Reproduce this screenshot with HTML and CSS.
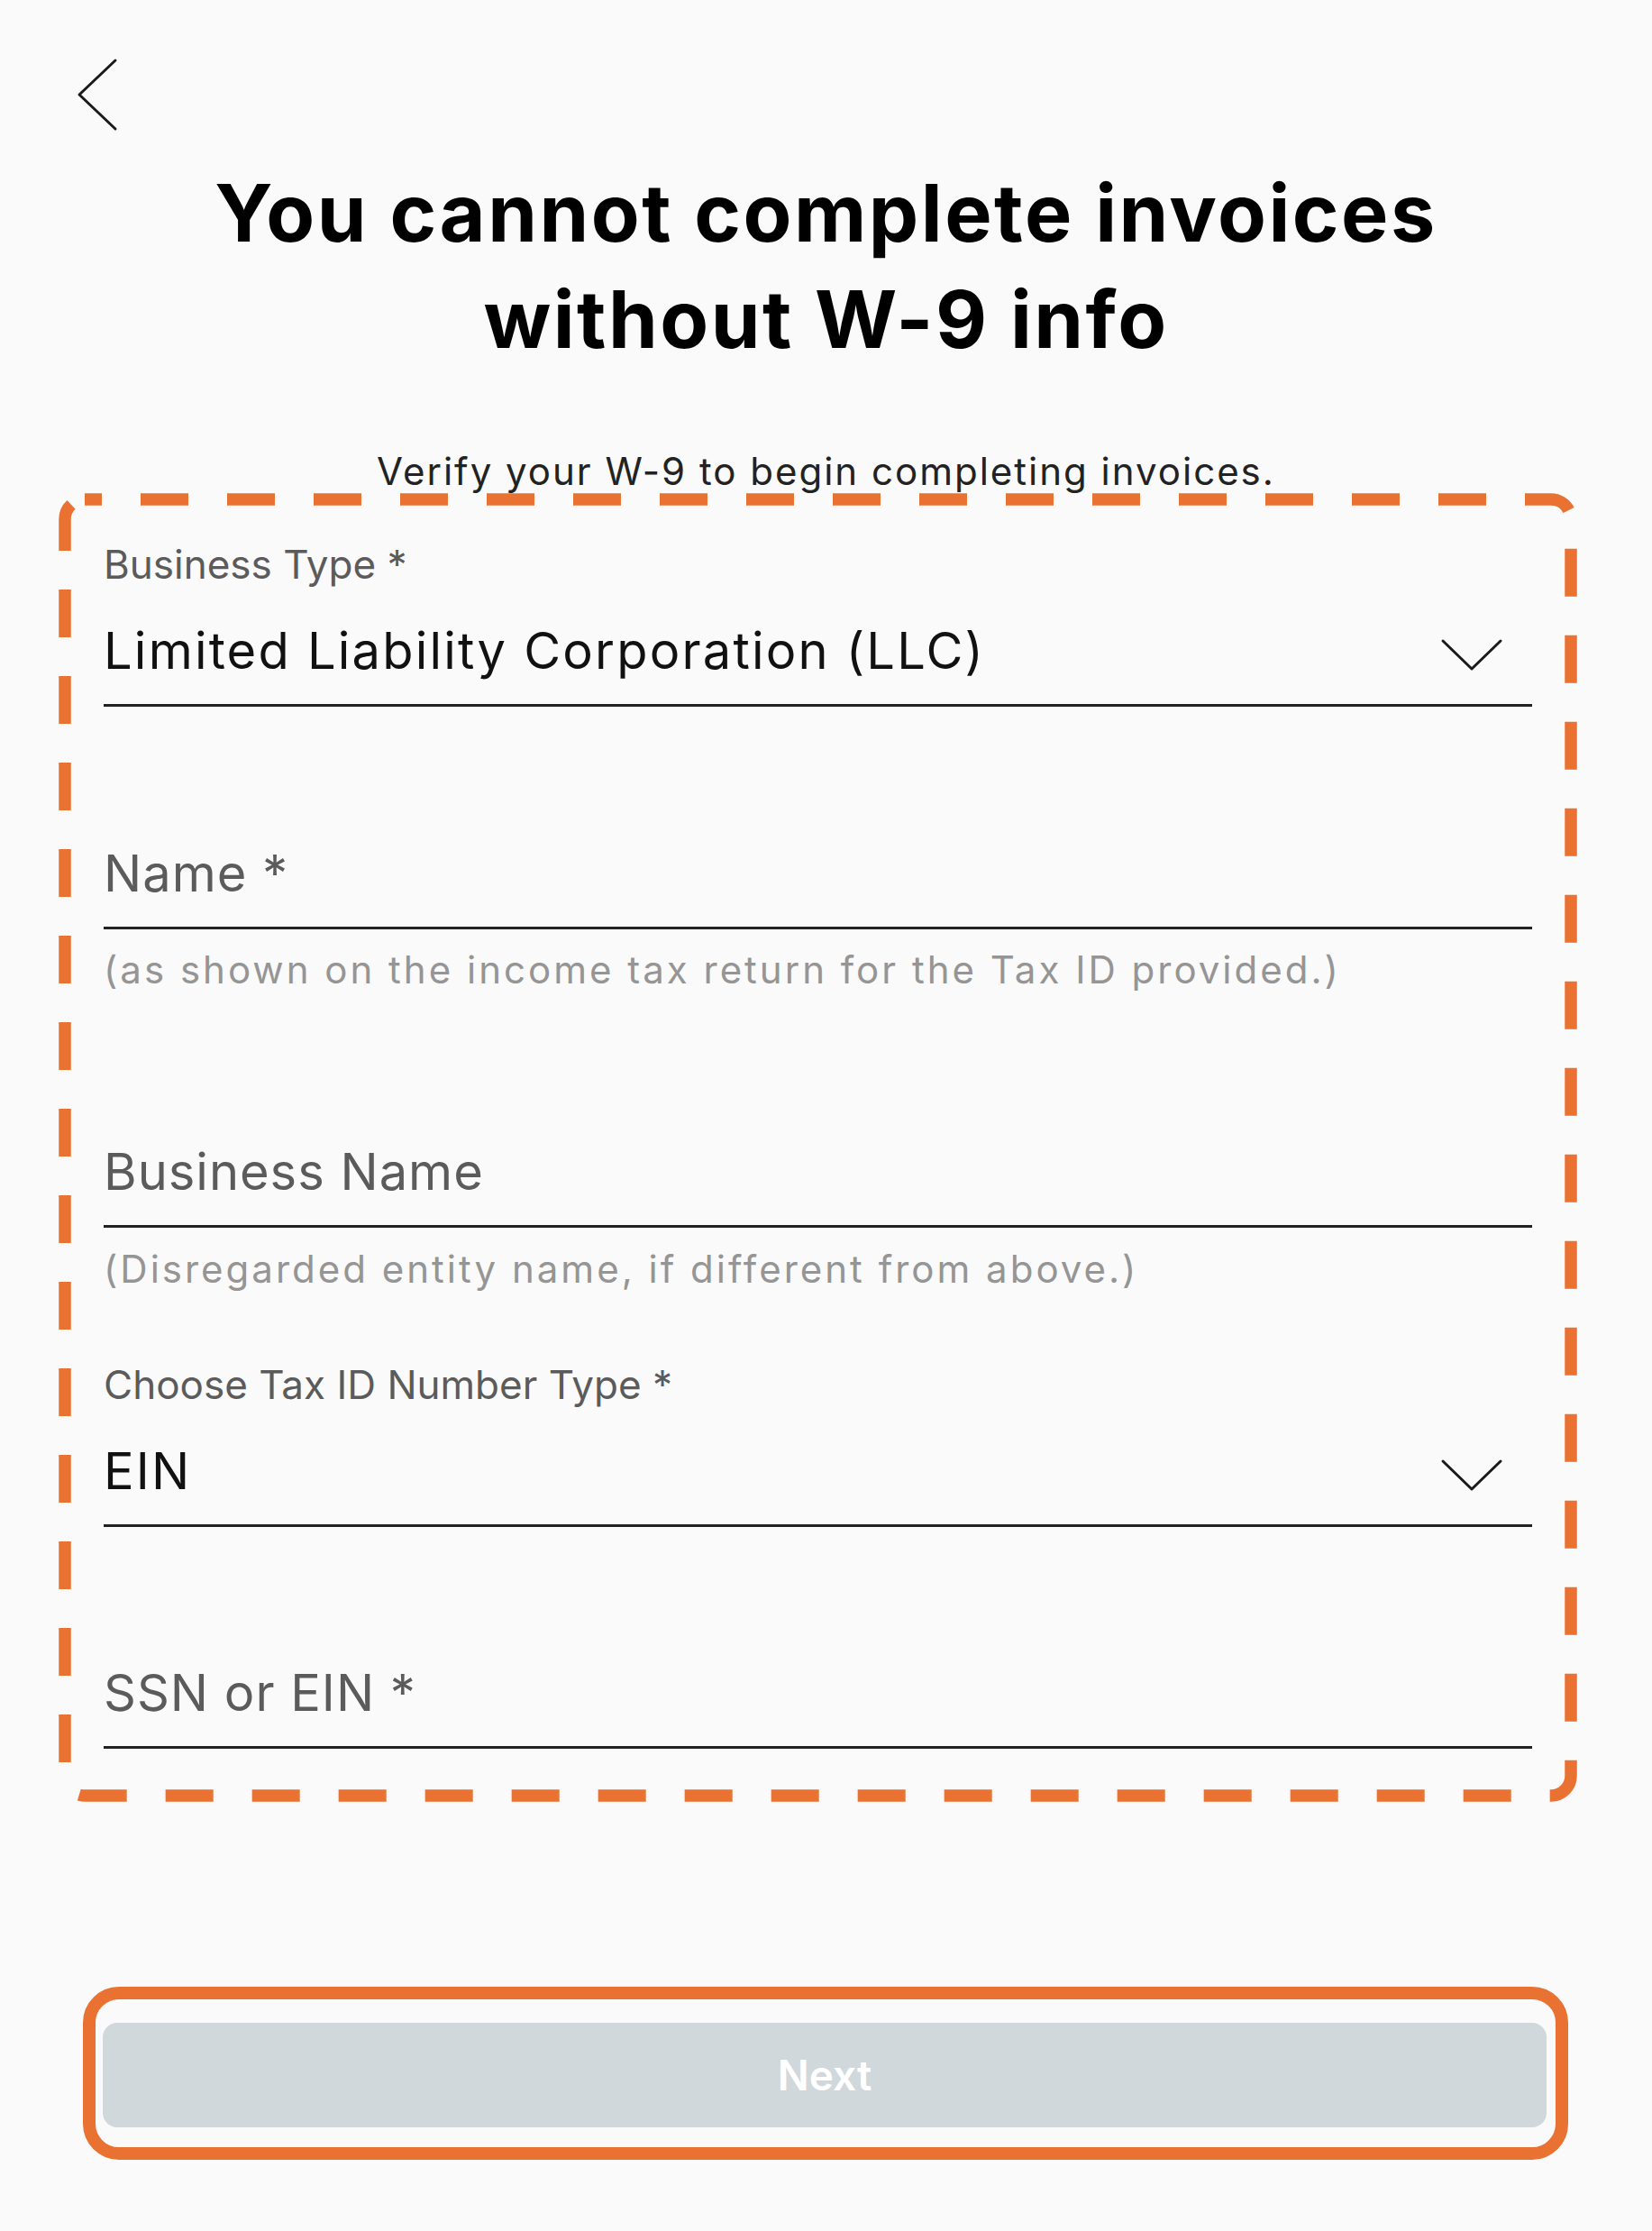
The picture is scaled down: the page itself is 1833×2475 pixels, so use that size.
FILE: index.html
```html
<!DOCTYPE html>
<html lang="en">
  <head>
    <meta charset="UTF-8" />
    <meta name="viewport" content="width=device-width, initial-scale=1.0" />
    <title>W-9 Info</title>
    <link rel="stylesheet" href="styles.css">
  </head>
  <body>
    <div class="screen">
      <div class="top-bar">
        <button class="back-btn" type="button" aria-label="Back">
          <svg width="60" height="90" viewBox="0 0 60 90">
            <path d="M50 7 L10 45 L50 83" fill="none" stroke="#1a1a1a" stroke-width="3" stroke-linecap="round" stroke-linejoin="round" />
          </svg>
        </button>
      </div>

      <h1 class="title">You cannot complete invoices<br>without W-9 info</h1>
      <p class="subtitle">Verify your W-9 to begin completing invoices.</p>

      <div class="w9-form">
        <svg class="highlight" width="1685" height="1452">
          <rect x="7" y="7" width="1671" height="1438" rx="22" ry="22" />
        </svg>

        <div class="field field-select">
          <label class="field-label">Business Type *</label>
          <div class="field-control">
            <span class="field-value">Limited Liability Corporation (LLC)</span>
            <svg class="caret" width="70" height="40" viewBox="0 0 70 40">
              <path d="M3 5 L35 36 L67 5" fill="none" stroke="#1a1a1a" stroke-width="3" stroke-linecap="round" stroke-linejoin="round" />
            </svg>
          </div>
        </div>

        <div class="field field-text field-name">
          <div class="field-control">
            <span class="field-placeholder">Name *</span>
          </div>
          <p class="field-help">(as shown on the income tax return for the Tax ID provided.)</p>
        </div>

        <div class="field field-text field-business">
          <div class="field-control">
            <span class="field-placeholder">Business Name</span>
          </div>
          <p class="field-help help-tight">(Disregarded entity name, if different from above.)</p>
        </div>

        <div class="field field-select field-taxtype">
          <label class="field-label">Choose Tax ID Number Type *</label>
          <div class="field-control">
            <span class="field-value">EIN</span>
            <svg class="caret" width="70" height="40" viewBox="0 0 70 40">
              <path d="M3 5 L35 36 L67 5" fill="none" stroke="#1a1a1a" stroke-width="3" stroke-linecap="round" stroke-linejoin="round" />
            </svg>
          </div>
        </div>

        <div class="field field-text field-ssn">
          <div class="field-control">
            <span class="field-placeholder">SSN or EIN *</span>
          </div>
        </div>
      </div>

      <div class="next-wrap">
        <button class="next-btn" type="button" disabled>Next</button>
      </div>
    </div>
  </body>
</html>
```

FILE: styles.css
```css
body {
  margin: 0;
  padding: 0;
  background: #fafafa;
  font-family: Inter, 'Noto Sans', sans-serif;
  color: #111;
}

.screen {
  min-height: 2475px;
  box-sizing: border-box;
}

.top-bar {
  padding: 60px 0 0 78px;
}

.back-btn {
  display: block;
  background: none;
  border: none;
  padding: 0;
  cursor: pointer;
}

.back-btn svg {
  display: block;
}

.title {
  margin: 27px 0 0;
  text-align: center;
  font-size: 88px;
  line-height: 118px;
  font-weight: 700;
  letter-spacing: 2.5px;
  color: #000;
}

.subtitle {
  margin: 85px 0 0;
  text-align: center;
  font-size: 42px;
  line-height: 50px;
  letter-spacing: 2px;
  color: #222;
}

/* form block with the dashed outline drawn over it */
.w9-form {
  position: relative;
  margin: -1px 0 0 65px;
  width: 1685px;
  padding: 53px 50px 56px 50px;
  box-sizing: border-box;
}

.highlight {
  position: absolute;
  top: 0;
  left: 0;
  pointer-events: none;
}

.highlight rect {
  fill: none;
  stroke: #e97232;
  stroke-width: 13.5;
  stroke-dasharray: 53 43;
  stroke-dashoffset: 34;
}

.field-label {
  display: block;
  font-size: 44px;
  line-height: 52px;
  color: #5b5b5b;
}

.field-control {
  display: flex;
  justify-content: space-between;
  align-items: center;
  padding-bottom: 26px;
  border-bottom: 3px solid #222;
}

.field-select .field-control {
  margin-top: 37px;
}

.field-value,
.field-placeholder {
  font-size: 56px;
  line-height: 66px;
}

.field-value {
  color: #111;
  letter-spacing: 2.2px;
}

.field-placeholder {
  color: #5b5b5b;
  letter-spacing: 1px;
}

.caret {
  display: block;
  margin: 8px 32px 0 0;
}

.field-help {
  margin: 20px 0 0;
  font-size: 42px;
  line-height: 50px;
  letter-spacing: 3px;
  color: #959595;
}

.help-tight {
  margin-top: 21px;
}

.field-name {
  margin-top: 152px;
}

.field-business {
  margin-top: 166px;
}

.field-taxtype {
  margin-top: 77px;
}

.field-ssn {
  margin-top: 151px;
}

.next-wrap {
  margin: 208px 0 0 92px;
  width: 1648px;
  padding: 26px 10px 22px 8px;
  border: 14px solid #e97232;
  border-radius: 40px;
  box-sizing: border-box;
}

.next-btn {
  display: block;
  width: 100%;
  height: 116px;
  border: none;
  border-radius: 16px;
  background: #d0d8dc;
  color: #fff;
  font-family: Inter, 'Noto Sans', sans-serif;
  font-size: 46px;
  font-weight: 600;
}
```
